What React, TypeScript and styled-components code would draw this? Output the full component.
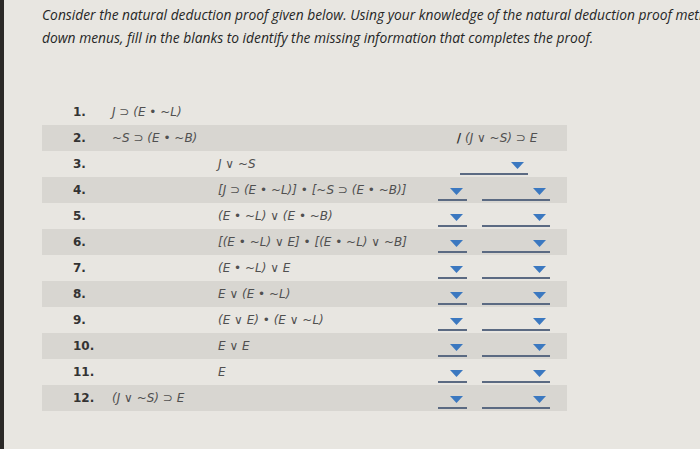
import React from 'react';
import styled, {createGlobalStyle} from "styled-components";

interface IStep {
  num: string,
  premise?: string,
  derived?: string,
  conclusion?: string,
  blanks: 0 | 1 | 2,
}

const steps: IStep[] = [
  {num: '1.', premise: 'J ⊃ (E • ~L)', blanks: 0},
  {num: '2.', premise: '~S ⊃ (E • ~B)', conclusion: '(J ∨ ~S) ⊃ E', blanks: 0},
  {num: '3.', derived: 'J ∨ ~S', blanks: 1},
  {num: '4.', derived: '[J ⊃ (E • ~L)] • [~S ⊃ (E • ~B)]', blanks: 2},
  {num: '5.', derived: '(E • ~L) ∨ (E • ~B)', blanks: 2},
  {num: '6.', derived: '[(E • ~L) ∨ E] • [(E • ~L) ∨ ~B]', blanks: 2},
  {num: '7.', derived: '(E • ~L) ∨ E', blanks: 2},
  {num: '8.', derived: 'E ∨ (E • ~L)', blanks: 2},
  {num: '9.', derived: '(E ∨ E) • (E ∨ ~L)', blanks: 2},
  {num: '10.', derived: 'E ∨ E', blanks: 2},
  {num: '11.', derived: 'E', blanks: 2},
  {num: '12.', premise: '(J ∨ ~S) ⊃ E', blanks: 2},
];

const GlobalStyle = createGlobalStyle`
  body {
    margin: 0;
    background: #e8e6e1;
    border-left: 4px solid #2b2927;
    min-height: 449px;
    font-family: "Open Sans", "DejaVu Sans", sans-serif;
  }
`;

// blank answer field: blue caret sitting on an underline
const Dropdown: React.FC<{wide?: boolean}> = ({wide}) => (
  <Select $wide={wide}>
    <CaretBox>
      <svg width="13" height="7" viewBox="0 0 13 7">
        <path d="M0 0 H13 L6.5 7 Z" fill="#3b78c0"/>
      </svg>
    </CaretBox>
    <Underline/>
  </Select>
);

const App: React.FC = () => {
  return (
    <>
      <GlobalStyle/>
      <Page>
        <Prompt>
          Consider the natural deduction proof given below. Using your knowledge of the natural deduction proof methods and the drop-<br/>
          down menus, fill in the blanks to identify the missing information that completes the proof.
        </Prompt>
        <ProofTable>
          {steps.map((s, i) =>
            <Row key={s.num} $striped={i % 2 === 1}>
              <Num>{s.num}</Num>
              <Premise>{s.premise}</Premise>
              <Derived>{s.derived}</Derived>
              <Justification>
                {s.conclusion && <Conclusion><Slash>/</Slash> {s.conclusion}</Conclusion>}
                {s.blanks === 1 && <Dropdown wide/>}
                {s.blanks === 2 &&
                  <>
                    <Dropdown/>
                    <Dropdown wide/>
                  </>
                }
              </Justification>
            </Row>
          )}
        </ProofTable>
      </Page>
    </>
  );
};

const Page = styled.div`
  padding: 3px 0 0 38px;
  overflow: hidden;
  height: 446px;
`;

const Prompt = styled.div`
  font-style: italic;
  font-size: 13.8px;
  line-height: 23px;
  color: #262626;
  white-space: nowrap;
`;

const ProofTable = styled.div`
  margin-top: 50px;
  width: 525px;
`;

const Row = styled.div<{$striped: boolean}>`
  display: flex;
  align-items: center;
  height: 26px;
  padding-left: 31px;
  background: ${props => props.$striped ? '#d8d6d1' : 'transparent'};
`;

const Num = styled.div`
  width: 39px;
  font-family: "DejaVu Sans", sans-serif;
  font-weight: bold;
  font-size: 12px;
  color: #333333;
`;

const Formula = styled.div`
  font-family: "DejaVu Sans", sans-serif;
  font-style: italic;
  font-size: 12px;
  color: #505050;
  white-space: nowrap;
`;

const Premise = styled(Formula)`
  width: 106px;
`;

const Derived = styled(Formula)`
  width: 220px;
`;

const Justification = styled.div`
  width: 112px;
  display: flex;
  justify-content: center;
  align-items: center;
  gap: 15px;
`;

const Conclusion = styled(Formula)`
  margin-left: 6px;
`;

const Slash = styled.span`
  font-weight: bold;
  font-style: normal;
  color: #333333;
`;

const Select = styled.div<{$wide?: boolean}>`
  width: ${props => props.$wide ? '68px' : '29px'};
  display: flex;
  flex-direction: column;
  padding-top: 9px;
`;

const CaretBox = styled.div`
  display: flex;
  justify-content: flex-end;
  padding-right: 4px;
  height: 11px;

  svg {
    display: block;
  }
`;

const Underline = styled.div`
  height: 2px;
  background: #5b6a82;
`;

export default App;
